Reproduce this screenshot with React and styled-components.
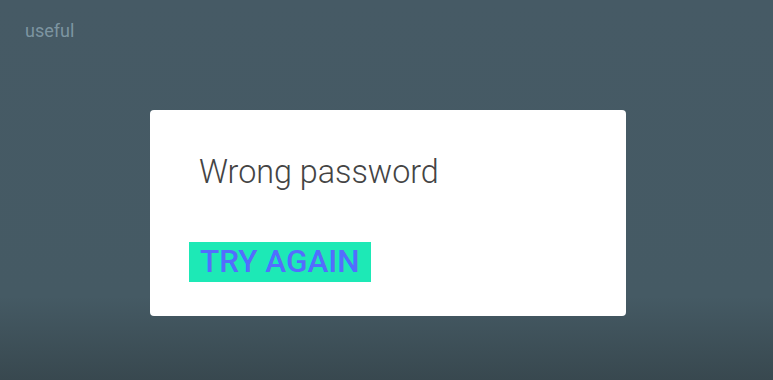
import React from 'react';
import styled, { createGlobalStyle } from 'styled-components';

const GlobalStyle = createGlobalStyle`
    html, body {
        margin: 0;
        padding: 0;
    }
    body {
        font-family: Roboto, "Liberation Sans", sans-serif;
    }
`;

const Page = styled.div`
    width: 773px;
    height: 380px;
    box-sizing: border-box;
    padding: 20px 25px 0;
    display: flex;
    flex-direction: column;
    background: linear-gradient(#465a65 0%, #455a64 78%, #38484f 100%);
    overflow: hidden;
`;

const Label = styled.div`
    font-size: 18px;
    font-weight: 400;
    line-height: 22px;
    color: #7d95a1;
`;

const Dialog = styled.div`
    align-self: flex-start;
    margin: 68px 0 0 125px;
    width: 476px;
    height: 206px;
    box-sizing: border-box;
    padding: 42px 0 0 39px;
    background: #ffffff;
    border-radius: 4px;
    display: flex;
    flex-direction: column;
    align-items: flex-start;
    gap: 50px;
`;

const Title = styled.h2`
    margin: 0 0 0 10px;
    font-size: 32.3px;
    font-weight: 300;
    line-height: 40px;
    color: #444444;
`;

const Action = styled.button`
    border: none;
    border-radius: 0;
    margin: 0;
    padding: 0 11px;
    height: 40px;
    font-family: inherit;
    font-size: 31.5px;
    font-weight: 500;
    line-height: 40px;
    color: #536dfe;
    background: #1de9b6;
    cursor: pointer;
`;

const App = () => {
    return (
        <Page>
            <GlobalStyle />
            <Label>useful</Label>
            <Dialog>
                <Title>Wrong password</Title>
                <Action>TRY AGAIN</Action>
            </Dialog>
        </Page>
    );
};

export default App;
